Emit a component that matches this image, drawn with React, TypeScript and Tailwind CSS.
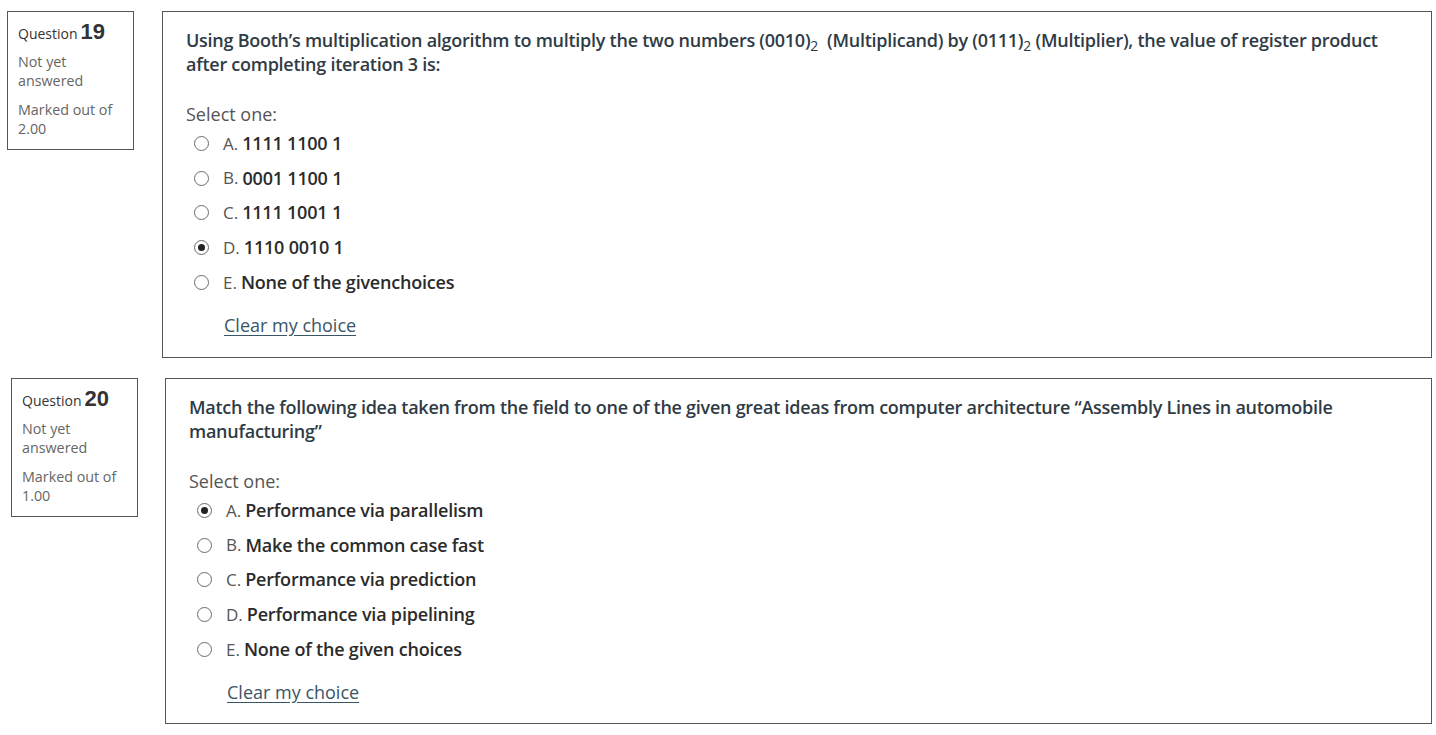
import React from "react";

type Opt = { letter: string; text: string; checked?: boolean };

function Radio({ checked }: { checked?: boolean }) {
  return (
    <span className="flex h-[15px] w-[15px] items-center justify-center rounded-full border border-[#6b6b6b] bg-white">
      {checked && <span className="h-[7px] w-[7px] rounded-full bg-[#222]" />}
    </span>
  );
}

function Info({ num, mark, cls }: { num: string; mark: string; cls: string }) {
  return (
    <div className={"shrink-0 self-start border border-[#555] bg-white pl-[10px] pt-[8px] pb-[10px] " + cls}>
      <div className="flex items-baseline leading-[24px]">
        <span className="text-[14px] text-[#333]" style={{ fontFamily: "'Open Sans', sans-serif" }}>Question</span>
        <span className="ml-[3px] text-[22px] font-bold text-[#333]" style={{ fontFamily: "'Liberation Sans', Arial, sans-serif" }}>{num}</span>
      </div>
      <div className="mt-[6px] text-[14.3px] leading-[19px] text-[#666]">Not yet<br />answered</div>
      <div className="mt-[10px] text-[14.3px] leading-[19px] text-[#666]">Marked out of<br />{mark}</div>
    </div>
  );
}

function Content({ children, opts, cls }: { children: React.ReactNode; opts: Opt[]; cls: string }) {
  return (
    <div className={"border border-[#555] bg-white pl-[23px] pt-[16px] " + cls}>
      <div className="pr-[40px] text-[18px] font-semibold leading-[24px] tracking-[-0.26px] text-[#2f3b45]">{children}</div>
      <div className="mt-[26px] text-[18px] leading-[24px] text-[#555]">Select one:</div>
      <div>
        {opts.map((o) => (
          <div key={o.letter} className="flex h-[34.75px] items-center">
            <span className="ml-[8px] mr-[14px]"><Radio checked={o.checked} /></span>
            <span className="text-[17px] text-[#555]">{o.letter}.</span>
            <span className="ml-[4px] text-[18px] font-semibold tracking-[-0.2px] text-[#2b2b2b]">{o.text}</span>
          </div>
        ))}
      </div>
      <div className="mt-[13px] ml-[38px] text-[18px] leading-[24px] text-[#3a5566] underline underline-offset-[3px]">Clear my choice</div>
    </div>
  );
}

export default function App() {
  const q19: Opt[] = [
    { letter: "A", text: "1111 1100 1" },
    { letter: "B", text: "0001 1100 1" },
    { letter: "C", text: "1111 1001 1" },
    { letter: "D", text: "1110 0010 1", checked: true },
    { letter: "E", text: "None of the givenchoices" },
  ];
  const q20: Opt[] = [
    { letter: "A", text: "Performance via parallelism", checked: true },
    { letter: "B", text: "Make the common case fast" },
    { letter: "C", text: "Performance via prediction" },
    { letter: "D", text: "Performance via pipelining" },
    { letter: "E", text: "None of the given choices" },
  ];
  return (
    <div className="h-[735px] w-[1436px] bg-white" style={{ fontFamily: "'Open Sans', sans-serif" }}>
      <div className="flex pt-[11px] pl-[7px]">
        <Info num="19" mark="2.00" cls="w-[127px] h-[139px]" />
        <div className="ml-[28px] w-[1270px]">
          <Content cls="h-[347px]" opts={q19}>
            Using Booth’s multiplication algorithm to multiply the two numbers (0010)<sub className="text-[14px] font-normal leading-[0]">2</sub>&nbsp; (Multiplicand) by (0111)<sub className="text-[14px] font-normal leading-[0]">2</sub> (Multiplier), the value of register product after completing iteration 3 is:
          </Content>
        </div>
      </div>
      <div className="flex pt-[20px] pl-[11px]">
        <Info num="20" mark="1.00" cls="w-[127px] h-[139px]" />
        <div className="ml-[27px] w-[1267px]">
          <Content cls="h-[346px]" opts={q20}>
            Match the following idea taken from the field to one of the given great ideas from computer architecture “Assembly Lines in automobile manufacturing”
          </Content>
        </div>
      </div>
    </div>
  );
}
